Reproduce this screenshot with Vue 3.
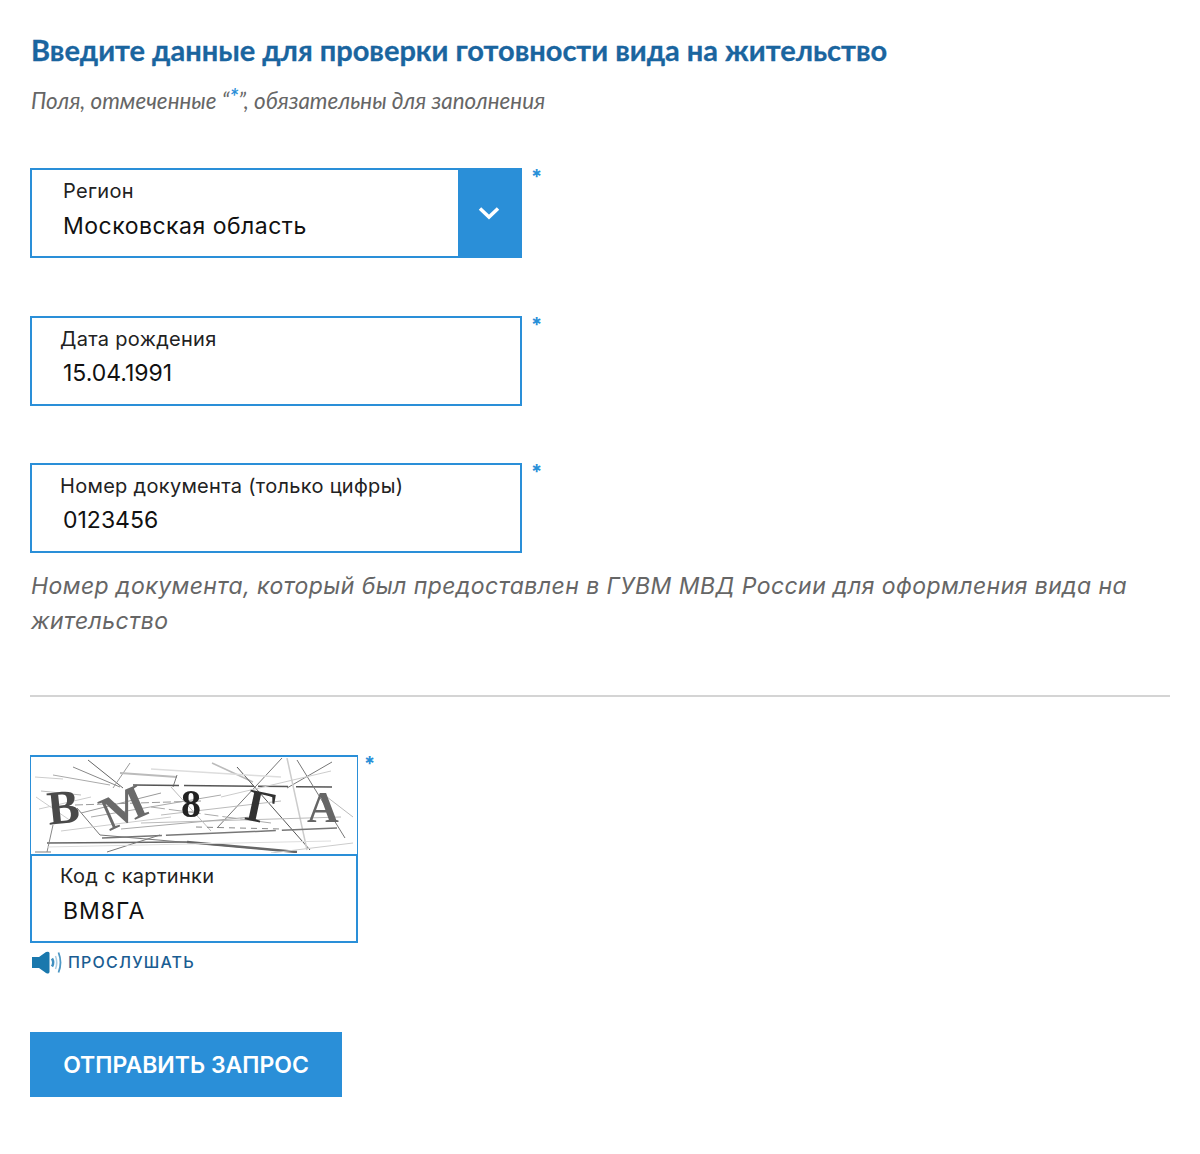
<script setup>
const fields = [
  { id: 'date', label: 'Дата рождения', value: '15.04.1991' },
  { id: 'doc', label: 'Номер документа (только цифры)', value: '0123456' }
]

// [x1, y1, x2, y2, цвет, толщина, штрих] в координатах картинки 326x97
const noise = [
  [57, 3, 92, 31, '#666', 1], [42, 10, 89, 30, '#888', 1], [22, 18, 79, 28, '#aaa', 1],
  [4, 20, 32, 22, '#ccc', 1], [99, 6, 82, 31, '#999', 1], [89, 16, 146, 20, '#bbb', 2],
  [146, 18, 142, 30, '#777', 1], [102, 28, 301, 30, '#555', 1.5, '46 5 70 4 30 8'],
  [181, 6, 222, 25, '#bbb', 1.5], [206, 10, 279, 93, '#555', 1], [251, 1, 186, 71, '#777', 1],
  [301, 5, 256, 31, '#777', 1], [266, 3, 314, 81, '#777', 1], [256, 1, 276, 93, '#ccc', 1.5],
  [71, 81, 306, 71, '#777', 1.5, '60 4 110 6'], [16, 86, 156, 85, '#666', 1.5], [69, 78, 266, 95, '#777', 1],
  [156, 85, 266, 95, '#666', 2.5], [4, 95, 20, 95, '#aaa', 1.5], [76, 95, 129, 78, '#777', 1],
  [22, 68, 16, 95, '#888', 1], [46, 51, 69, 78, '#777', 1], [44, 48, 170, 44, '#999', 1, '8 3'],
  [50, 56, 130, 36, '#999', 1], [60, 60, 190, 38, '#aaa', 1], [120, 50, 240, 66, '#aaa', 1, '14 4'],
  [130, 58, 250, 44, '#bbb', 1], [110, 66, 310, 60, '#bbb', 1], [90, 72, 220, 60, '#aaa', 1],
  [140, 30, 180, 74, '#bbb', 1], [5, 40, 40, 64, '#ccc', 1], [296, 40, 322, 60, '#bbb', 1],
  [240, 96, 322, 86, '#ccc', 1], [165, 70, 250, 72, '#888', 1, '6 5'], [10, 34, 50, 38, '#bbb', 1],
  [8, 52, 60, 40, '#ccc', 1], [190, 40, 300, 14, '#ccc', 1], [120, 12, 250, 20, '#ddd', 1.5],
  [16, 90, 300, 84, '#ddd', 1], [30, 74, 140, 60, '#ccc', 1]
]

const letters = [
  { ch: 'В', x: 34, y: 66, size: 48, rot: -6, fill: '#4a4a4a' },
  { ch: 'М', x: 99, y: 65, size: 48, rot: -24, fill: '#6b6b6b' },
  { ch: '8', x: 160, y: 60, size: 40, rot: 0, fill: '#222' },
  { ch: 'Г', x: 227, y: 65, size: 46, rot: 12, fill: '#333' },
  { ch: 'А', x: 292, y: 65, size: 44, rot: 0, fill: '#666' }
]
</script>

<template>
  <div class="page">
    <h1 class="page__title">Введите данные для проверки готовности вида на жительство</h1>
    <p class="page__note">Поля, отмеченные “<span class="page__note-star">*</span>”, обязательны для заполнения</p>

    <div class="fields">
      <div class="field field--select">
        <div class="field__body">
          <div class="field__label">Регион</div>
          <div class="field__value">Московская область</div>
        </div>
        <div class="field__arrow">
          <svg width="22" height="14" viewBox="0 0 22 14">
            <path d="M2 2.500 L11 11 L20 2.500" fill="none" stroke="#fff" stroke-width="3.500" />
          </svg>
        </div>
        <span class="star">*</span>
      </div>

      <div v-for="f in fields" :key="f.id" class="field">
        <div class="field__body">
          <div class="field__label">{{ f.label }}</div>
          <div class="field__value">{{ f.value }}</div>
        </div>
        <span class="star">*</span>
      </div>
    </div>

    <p class="hint">Номер документа, который был предоставлен в ГУВМ МВД России для оформления вида на жительство</p>

    <hr class="divider" />

    <div class="captcha">
      <svg class="captcha__img" width="326" height="97" viewBox="0 0 326 97">
        <defs>
          <filter id="captcha-blur" x="0" y="0" width="100%" height="100%">
            <feGaussianBlur stdDeviation="0.7" />
          </filter>
        </defs>
        <g filter="url(#captcha-blur)">
          <line
            v-for="(l, i) in noise"
            :key="i"
            :x1="l[0]" :y1="l[1]" :x2="l[2]" :y2="l[3]"
            :stroke="l[4]" :stroke-width="l[5]" :stroke-dasharray="l[6]"
          />
          <text
            v-for="t in letters"
            :key="t.ch"
            :x="t.x" :y="t.y"
            :font-size="t.size"
            :fill="t.fill"
            :transform="`rotate(${t.rot} ${t.x} ${t.y})`"
            class="captcha__letter"
            text-anchor="middle"
          >{{ t.ch }}</text>
        </g>
      </svg>
      <div class="field__body captcha__input">
        <div class="field__label">Код с картинки</div>
        <div class="field__value">ВМ8ГА</div>
      </div>
      <span class="star">*</span>
    </div>

    <a class="listen">
      <svg width="32" height="24" viewBox="0 0 32 24">
        <path d="M2 7 H9 L16 2 Q19 1 19.500 3 V22 Q19 24.500 16 23 L9 18 H2 Z" fill="#1a78ad" />
        <path d="M22 8.500 Q24.500 12.500 22 16.500" fill="none" stroke="#3f8fc0" stroke-width="2.500" />
        <path d="M25.500 6 Q28 12.500 25.500 19" fill="none" stroke="#a9cde3" stroke-width="1.500" />
        <path d="M28.500 2.500 Q32.500 12.500 28.500 22.500" fill="none" stroke="#4d97c4" stroke-width="1.800" />
      </svg>
      <span>ПРОСЛУШАТЬ</span>
    </a>

    <button class="submit">ОТПРАВИТЬ ЗАПРОС</button>
  </div>
</template>

<style scoped>
.page {
  box-sizing: border-box;
  width: 1200px;
  height: 1154px;
  padding: 32px 30px 0;
  background: #fff;
  font-family: "Inter", "Liberation Sans", sans-serif;
  color: #111;
}

.page__title {
  margin: 0 0 0 1px;
  font-family: "Lato", sans-serif;
  font-size: 29px;
  line-height: 36px;
  font-weight: 700;
  -webkit-text-stroke: 0.300px #1a659f;
  color: #1a659f;
  white-space: nowrap;
}

.page__note {
  margin: 19px 0 0 1px;
  font-family: "Lato", sans-serif;
  font-style: italic;
  font-size: 22.400px;
  line-height: 28px;
  color: #666;
}

.page__note-star {
  color: #2a8fd8;
  font-weight: 700;
  position: relative;
  top: -4px;
}

.fields {
  display: flex;
  flex-direction: column;
  gap: 57.500px;
  margin-top: 53px;
}

.field {
  position: relative;
  width: 492px;
  height: 90px;
  display: flex;
}

.field__body {
  flex: 1;
  box-sizing: border-box;
  border: 2px solid #2a8fd8;
  padding: 9px 0 0 28px;
}

.field--select .field__body {
  border-right: none;
  padding-left: 31px;
}

.field__label {
  font-size: 20px;
  line-height: 24px;
  letter-spacing: 0.300px;
  color: #222;
}

.field__value {
  margin: 8px 0 0 3px;
  font-size: 23px;
  line-height: 28px;
  color: #111;
}

.field--select .field__value {
  margin: 9px 0 0;
  letter-spacing: 0.500px;
}

.field__arrow {
  box-sizing: border-box;
  width: 64px;
  padding: 0 3px 0 0;
  background: #2a8fd8;
  display: flex;
  align-items: center;
  justify-content: center;
}

.star {
  position: absolute;
  left: calc(100% + 9px);
  top: -2px;
  font-size: 20px;
  line-height: 22px;
  font-weight: 700;
  color: #2a8fd8;
}

.hint {
  margin: 16px 0 0 1px;
  font-style: italic;
  font-size: 23px;
  line-height: 35px;
  letter-spacing: 0.440px;
  color: #666;
}

.divider {
  margin: 56px 0 0;
  border: none;
  border-top: 2px solid #d4d4d4;
}

.captcha {
  position: relative;
  width: 328px;
  margin-top: 58px;
}

.captcha .star {
  left: calc(100% + 6px);
}

.captcha__img {
  display: block;
  box-sizing: content-box;
  border: 1px solid #2a8fd8;
  border-width: 2px 1px 0;
}

.captcha__letter {
  font-family: "Liberation Serif", serif;
  font-weight: 700;
}

.captcha__input {
  height: 89px;
  flex: none;
  padding-top: 8px;
}

.captcha__input .field__value {
  margin-top: 9px;
  letter-spacing: 1px;
}

.listen {
  display: flex;
  align-items: center;
  gap: 6px;
  margin-top: 7px;
  font-size: 16px;
  line-height: 24px;
  font-weight: 500;
  letter-spacing: 1.200px;
  color: #1a5d92;
}

.submit {
  display: block;
  width: 312px;
  height: 65px;
  margin-top: 58px;
  padding: 0;
  border: none;
  background: #2a8fd8;
  color: #fff;
  font-family: "Inter", "Liberation Sans", sans-serif;
  font-size: 23px;
  font-weight: 600;
}
</style>
